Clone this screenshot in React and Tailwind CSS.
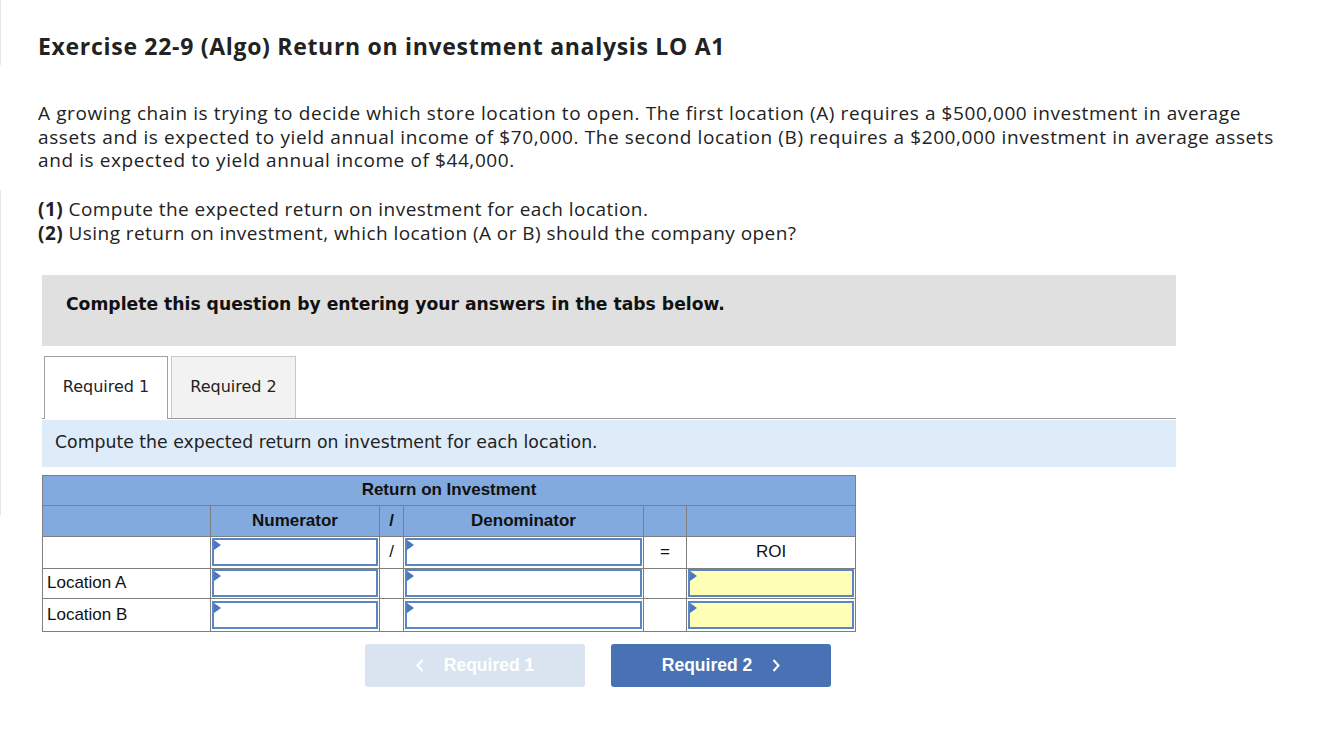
import React from "react";

const Tri = () => (
  <span className="absolute left-0 top-0 w-0 h-0 border-t-[5px] border-b-[5px] border-l-[7px] border-t-transparent border-b-transparent border-l-[#4a78bd]" />
);

const Input = ({ yellow }) => (
  <div className={`relative h-[28px] mx-[1px] border-2 border-[#5a86c6] ${yellow ? "bg-[#ffffb8]" : "bg-white"}`}>
    <Tri />
  </div>
);

const Chev = ({ left }) => (
  <svg width="8" height="13" viewBox="0 0 8 13" className="shrink-0">
    <path d={left ? "M6.5 1 L1.5 6.5 L6.5 12" : "M1.5 1 L6.5 6.5 L1.5 12"} fill="none" stroke="white" strokeWidth="2" />
  </svg>
);

export default function App() {
  const proxima = { fontFamily: "'Open Sans', Lato, sans-serif" };
  const cell = "border border-[#7f7f7f] p-0";
  return (
    <div className="min-h-[736px] bg-white text-[#222] relative">
      <div className="absolute left-0 top-0 h-[65px] w-px bg-[#e6e6e6]" />
      <div className="absolute left-0 top-[190px] h-[325px] w-px bg-[#e6e6e6]" />
      <div className="pl-[38px] pr-[30px] pt-[29px]" style={proxima}>
        <h1 className="text-[23px] font-bold leading-[34px] tracking-[0.7px] text-[#222]">
          Exercise 22-9 (Algo) Return on investment analysis LO A1
        </h1>
        <p className="mt-[39px] text-[19px] leading-[23.5px] tracking-[0.6px]">
          A growing chain is trying to decide which store location to open. The first location (A) requires a $500,000 investment in average assets and is expected to yield annual income of $70,000. The second location (B) requires a $200,000 investment in average assets and is expected to yield annual income of $44,000.
        </p>
        <p className="mt-[24px] text-[19px] leading-[24px] tracking-[0.45px]">
          <b>(1)</b> Compute the expected return on investment for each location.
          <br />
          <b>(2)</b> Using return on investment, which location (A or B) should the company open?
        </p>
      </div>
      <div className="ml-[42px] w-[1134px]" style={{ fontFamily: "'DejaVu Sans', Verdana, sans-serif" }}>
        <div className="mt-[30px] h-[71px] bg-[#e0e0e0] pl-[24px] pt-[17px] text-[17.2px] font-bold text-[#111]">
          Complete this question by entering your answers in the tabs below.
        </div>
        <div className="mt-[10px] flex items-end h-[63px] border-b border-[#9a9a9a]">
          <div className="ml-[2px] w-[124px] h-[63px] border border-b-0 border-[#a0a0a0] bg-white flex items-center justify-center text-[16px] text-[#222] -mb-px pb-px">
            Required 1
          </div>
          <div className="ml-[3px] w-[125px] h-[62px] border border-b-0 border-[#c8c8c8] bg-[#f2f2f2] flex items-center justify-center text-[16px] text-[#222]">
            Required 2
          </div>
        </div>
        <div className="mt-px h-[47px] bg-[#deebf8] pl-[13px] flex items-center text-[17.3px] text-[#222]">
          Compute the expected return on investment for each location.
        </div>
      </div>
      <div className="ml-[42px] mt-[8px]" style={{ fontFamily: "'Liberation Sans', Arial, sans-serif" }}>
        <table className="border-collapse text-[17px] leading-[20px] text-[#111]">
          <colgroup>
            <col className="w-[168px]" />
            <col className="w-[169px]" />
            <col className="w-[24px]" />
            <col className="w-[240px]" />
            <col className="w-[43px]" />
            <col className="w-[169px]" />
          </colgroup>
          <tbody>
            <tr className="h-[30px] bg-[#82aade]">
              <td colSpan={6} className={`${cell} text-center font-bold`}>
                Return on Investment
              </td>
            </tr>
            <tr className="h-[31px] bg-[#82aade] font-bold">
              <td className={cell}></td>
              <td className={`${cell} text-center`}>Numerator</td>
              <td className={`${cell} text-center`}>/</td>
              <td className={`${cell} text-center`}>Denominator</td>
              <td className={cell}></td>
              <td className={cell}></td>
            </tr>
            <tr className="h-[32px]">
              <td className={cell}></td>
              <td className={cell}><Input /></td>
              <td className={`${cell} text-center`}>/</td>
              <td className={cell}><Input /></td>
              <td className={`${cell} text-center`}>=</td>
              <td className={`${cell} text-center`}>ROI</td>
            </tr>
            <tr className="h-[30px]">
              <td className="border border-[#7f7f7f] py-0 px-[4px]">Location A</td>
              <td className={cell}><Input /></td>
              <td className={cell}></td>
              <td className={cell}><Input /></td>
              <td className={cell}></td>
              <td className={cell}><Input yellow /></td>
            </tr>
            <tr className="h-[33px]">
              <td className="border border-[#7f7f7f] py-0 px-[4px]">Location B</td>
              <td className={cell}><Input /></td>
              <td className={cell}></td>
              <td className={cell}><Input /></td>
              <td className={cell}></td>
              <td className={cell}><Input yellow /></td>
            </tr>
          </tbody>
        </table>
        <div className="mt-[12px] ml-[323px] flex gap-[26px]">
          <button className="w-[220px] h-[43px] rounded-[3px] bg-[#dae4f0] text-white font-bold text-[17.5px] flex items-center justify-center gap-[20px]">
            <Chev left />Required 1
          </button>
          <button className="w-[220px] h-[43px] rounded-[3px] bg-[#4872b3] text-white font-bold text-[17.5px] flex items-center justify-center gap-[20px]">
            Required 2<Chev />
          </button>
        </div>
      </div>
    </div>
  );
}
